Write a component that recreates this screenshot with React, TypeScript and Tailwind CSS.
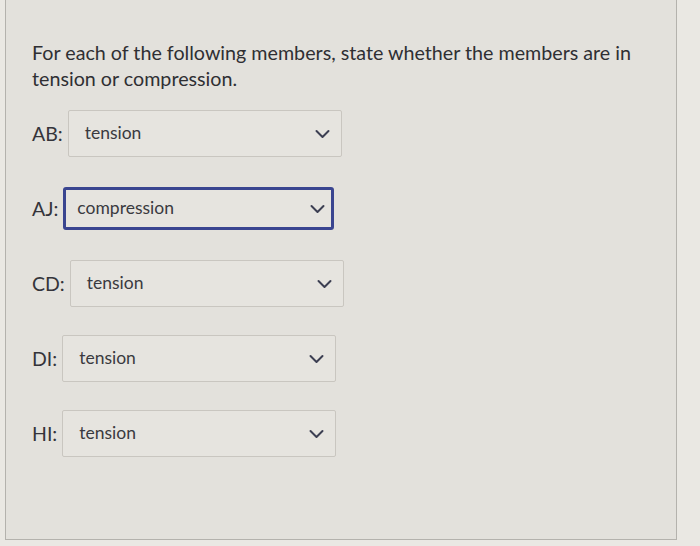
import React from "react"

type Row = {
    label: string
    value: string
    active?: boolean
}

const rows: Row[] = [
    { label: "AB:", value: "tension" },
    { label: "AJ:", value: "compression", active: true },
    { label: "CD:", value: "tension" },
    { label: "DI:", value: "tension" },
    { label: "HI:", value: "tension" },
]

function Chevron() {
    return (
        <svg width="15" height="10" viewBox="0 0 15 10" fill="none">
            <polyline points="1.5,2 7.5,8 13.5,2" stroke="#3c3f52" strokeWidth="2" strokeLinecap="round" strokeLinejoin="round" />
        </svg>
    )
}

function App() {
    return (
        <div className="w-[700px] h-[546px] bg-[#eae8e3] overflow-hidden" style={{ fontFamily: "Lato, 'Open Sans', sans-serif" }}>
            <div className="ml-[5px] w-[672px] h-[540px] bg-[#e3e1dc] border-l border-r border-b border-[#b4b2ad] pl-[26px] pt-[40px]">
                <p className="text-[19.7px] leading-[26px] text-[#2f2f33] w-[615px]">
                    For each of the following members, state whether the members are in tension or compression.
                </p>

                <div className="flex flex-col gap-[28px] mt-[18px]">
                    {rows.map(row => (
                        <div key={row.label} className="flex items-center gap-[5px] h-[47px]">
                            <span className="text-[19.5px] text-[#34343a]">{row.label}</span>
                            <div
                                className={
                                    row.active
                                        ? "w-[271px] h-[43px] flex items-center justify-between pl-[11px] pr-[6px] border-[3px] border-[#3a4590] rounded-[3px] bg-[#e6e4df]"
                                        : "w-[274px] h-[47px] flex items-center justify-between pl-[16px] pr-[11px] border border-[#c9c6c0] rounded-[2px] bg-[#e6e4df]"
                                }
                            >
                                <span className="text-[17.5px] text-[#3a3a40]">{row.value}</span>
                                <Chevron />
                            </div>
                        </div>
                    ))}
                </div>
            </div>
        </div>
    )
}

export default App
